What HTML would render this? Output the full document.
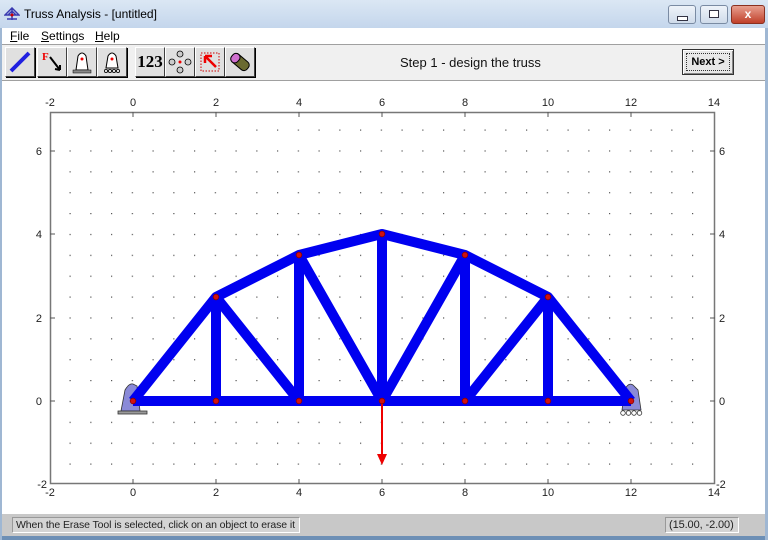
<!DOCTYPE html>
<html><head><style>
body{margin:0;width:768px;height:540px;overflow:hidden;font-family:"Liberation Sans",sans-serif;background:#fff;position:relative}
.title{position:absolute;left:0;top:0;width:768px;height:28px;background:linear-gradient(#dbe7f4,#c4d6ec);border-bottom:1px solid #a9bcd4}
.title span{position:absolute;left:24px;top:7px;font-size:12px;color:#000}
.wb{position:absolute;top:5px;height:17px;border:1px solid #7a8ba3;border-radius:3px;background:linear-gradient(#eef3f9,#cfdbea)}
.menu{position:absolute;left:0;top:28px;width:768px;height:16px;background:#fff;font-size:12px}
.menu span{position:absolute;top:1px}
.tb{position:absolute;left:0;top:44px;width:768px;height:35px;background:#f0f0f0;border-top:1px solid #a0a0a0;border-bottom:1px solid #a0a0a0}
.btn{position:absolute;top:2px;width:28px;height:28px;background:#e0e0e0;border:1px solid;border-color:#fff #404040 #404040 #fff;box-shadow:1px 1px 0 #000}
.status{position:absolute;left:0;top:514px;width:768px;height:22px;background:#c8c8c8;font-size:11px}
.status div{position:absolute;top:3px;height:14px;border:1px solid;border-color:#999 #fff #fff #999;background:#d4d4d4;line-height:14px;padding:0 3px;color:#222;white-space:nowrap;overflow:hidden;letter-spacing:-0.1px}
</style></head><body>
<div class="title">
<svg style="position:absolute;left:4px;top:7px" width="16" height="14"><path d="M1 8 L8 1 L15 8 Z M4 8 L8 4 L12 8 M8 1 V13 M3 12 H13" stroke="#3a3ab0" stroke-width="1.5" fill="none"/><circle cx="8" cy="8" r="1.5" fill="#c00"/></svg>
<span>Truss Analysis - [untitled]</span>
<div class="wb" style="left:668px;width:26px"><div style="position:absolute;left:8px;top:10px;width:9px;height:3px;background:#fff;border:1px solid #334"></div></div>
<div class="wb" style="left:700px;width:26px"><div style="position:absolute;left:8px;top:4px;width:8px;height:6px;background:#fff;border:1px solid #334"></div></div>
<div class="wb" style="left:731px;width:32px;background:linear-gradient(#e8a090,#c0402a);border-color:#8a3020;color:#fff;font-weight:bold;font-size:12px;text-align:center;line-height:16px">x</div>
</div>
<div class="menu"><span style="left:10px"><u>F</u>ile</span><span style="left:41px"><u>S</u>ettings</span><span style="left:95px"><u>H</u>elp</span></div>
<div class="tb">
<div class="btn" style="left:5px"><svg width="28" height="28"><line x1="5" y1="23" x2="23" y2="5" stroke="#2020e0" stroke-width="4"/></svg></div>
<div class="btn" style="left:37px"><svg width="28" height="28"><text x="4" y="12" font-size="11" font-weight="bold" fill="#e00" font-family="Liberation Serif">F</text><path d="M12 9 L22 22 M22 22 L17 21 M22 22 L22 17" stroke="#000" stroke-width="2" fill="none"/></svg></div>
<div class="btn" style="left:67px"><svg width="28" height="28"><path d="M8 22 L10 8 Q14 2 18 8 L20 22 Z" fill="#fff" stroke="#000"/><rect x="5" y="22" width="18" height="3" fill="#888" stroke="#000" stroke-width=".5"/><circle cx="14" cy="11" r="1.5" fill="#e00"/></svg></div>
<div class="btn" style="left:97px"><svg width="28" height="28"><path d="M8 20 L10 8 Q14 2 18 8 L20 20 Z" fill="#fff" stroke="#000"/><circle cx="14" cy="11" r="1.5" fill="#e00"/><g fill="none" stroke="#000" stroke-width=".8"><circle cx="8" cy="23" r="1.6"/><circle cx="12" cy="23" r="1.6"/><circle cx="16" cy="23" r="1.6"/><circle cx="20" cy="23" r="1.6"/></g></svg></div>
<div class="btn" style="left:135px;font:bold 17px 'Liberation Serif',serif;line-height:28px;text-align:center">123</div>
<div class="btn" style="left:165px"><svg width="28" height="28"><g fill="#ccc" stroke="#000" stroke-width=".8"><circle cx="14" cy="6" r="3"/><circle cx="6" cy="14" r="3"/><circle cx="22" cy="14" r="3"/><circle cx="14" cy="22" r="3"/></g><circle cx="14" cy="14" r="1.5" fill="#e00"/></svg></div>
<div class="btn" style="left:195px"><svg width="28" height="28"><rect x="5" y="5" width="18" height="18" fill="none" stroke="#c00" stroke-dasharray="1.5 1.5"/><path d="M9 8 L20 19 M9 8 L9 15 M9 8 L16 8" stroke="#e00" stroke-width="2.5" fill="none"/></svg></div>
<div class="btn" style="left:225px"><svg width="28" height="28"><g transform="rotate(40 14 14)"><rect x="4" y="9" width="20" height="10" rx="4" fill="#6a6a30" stroke="#000"/><rect x="4" y="9" width="8" height="10" rx="4" fill="#d070d0" stroke="#000"/></g></svg></div>
<div style="position:absolute;left:400px;top:10px;font-size:13px;color:#111">Step 1 - design the truss</div>
<div style="position:absolute;left:682px;top:4px;width:50px;height:24px;border:1px solid #333;background:#e8e8e8;box-shadow:inset 1px 1px #fff,inset -1px -1px #888"><div style="position:absolute;left:3px;top:3px;right:3px;bottom:3px;border:1px dotted #333;font:bold 11px 'Liberation Sans',sans-serif;text-align:center;line-height:16px">Next &gt;</div></div>
</div>
<svg style="position:absolute;left:0;top:80px" width="768" height="434" viewBox="0 80 768 434">
<defs><pattern id="d" x="69.5" y="129.5" width="20.75" height="20.875" patternUnits="userSpaceOnUse"><rect width="1.2" height="1.2" fill="#555"/></pattern></defs>
<rect x="66" y="126" width="632" height="342" fill="url(#d)"/>
<rect x="50.5" y="112.5" width="664" height="371" fill="none" stroke="#777" stroke-width="1.5"/>
<g stroke="#555" stroke-width="1">
<line x1="133" y1="112" x2="133" y2="117"/><line x1="216" y1="112" x2="216" y2="117"/><line x1="299" y1="112" x2="299" y2="117"/><line x1="382" y1="112" x2="382" y2="117"/><line x1="465" y1="112" x2="465" y2="117"/><line x1="548" y1="112" x2="548" y2="117"/><line x1="631" y1="112" x2="631" y2="117"/>
<line x1="133" y1="484" x2="133" y2="479"/><line x1="216" y1="484" x2="216" y2="479"/><line x1="299" y1="484" x2="299" y2="479"/><line x1="382" y1="484" x2="382" y2="479"/><line x1="465" y1="484" x2="465" y2="479"/><line x1="548" y1="484" x2="548" y2="479"/><line x1="631" y1="484" x2="631" y2="479"/>
<line x1="50" y1="151" x2="55" y2="151"/><line x1="50" y1="234" x2="55" y2="234"/><line x1="50" y1="318" x2="55" y2="318"/><line x1="50" y1="401" x2="55" y2="401"/>
<line x1="715" y1="151" x2="710" y2="151"/><line x1="715" y1="234" x2="710" y2="234"/><line x1="715" y1="318" x2="710" y2="318"/><line x1="715" y1="401" x2="710" y2="401"/>
</g>
<g font-family="Liberation Sans,sans-serif" font-size="11" fill="#222" text-anchor="middle">
<text x="50" y="106">-2</text><text x="133" y="106">0</text><text x="216" y="106">2</text><text x="299" y="106">4</text><text x="382" y="106">6</text><text x="465" y="106">8</text><text x="548" y="106">10</text><text x="631" y="106">12</text><text x="714" y="106">14</text>
<text x="50" y="496">-2</text><text x="133" y="496">0</text><text x="216" y="496">2</text><text x="299" y="496">4</text><text x="382" y="496">6</text><text x="465" y="496">8</text><text x="548" y="496">10</text><text x="631" y="496">12</text><text x="714" y="496">14</text>
</g>
<g font-family="Liberation Sans,sans-serif" font-size="11" fill="#222">
<text x="42" y="155" text-anchor="end">6</text><text x="42" y="238" text-anchor="end">4</text><text x="42" y="322" text-anchor="end">2</text><text x="42" y="405" text-anchor="end">0</text><text x="47" y="488" text-anchor="end">-2</text>
<text x="719" y="155">6</text><text x="719" y="238">4</text><text x="719" y="322">2</text><text x="719" y="405">0</text><text x="716" y="488">-2</text>
</g>
<path d="M121 411 L125 390 Q129 383 133 384 L137 386 L140 411 Z" fill="#8a8ad8" stroke="#333" stroke-width=".8"/>
<rect x="118" y="411" width="29" height="3" fill="#999" stroke="#333" stroke-width=".8"/>
<path d="M622 410 L625 389 Q629 382 633 385 L638 390 L641 410 Z" fill="#8a8ad8" stroke="#333" stroke-width=".8"/>
<g fill="#fff" stroke="#333" stroke-width=".8"><circle cx="623" cy="413" r="2.3"/><circle cx="628.5" cy="413" r="2.3"/><circle cx="634" cy="413" r="2.3"/><circle cx="639.5" cy="413" r="2.3"/></g>
<g stroke="#0000f0" stroke-width="10" stroke-linecap="butt" fill="none" stroke-linejoin="round">
<path d="M133 401 H631"/>
<path d="M133 401 L216 297 L299 255 L382 234 L465 255 L548 297 L631 401"/>
<path d="M216 297 V401 M299 255 V401 M382 234 V401 M465 255 V401 M548 297 V401"/>
<path d="M216 297 L299 401 M299 255 L382 401 M382 401 L465 255 M465 401 L548 297"/>
</g>
<path d="M382 401 V458" stroke="#e00" stroke-width="2"/>
<path d="M377 454 L382 465 L387 454 Z" fill="#e00"/>
<g fill="#d01010" stroke="#800" stroke-width=".8">
<circle cx="133" cy="401" r="2.8"/><circle cx="216" cy="401" r="2.8"/><circle cx="299" cy="401" r="2.8"/><circle cx="382" cy="401" r="2.8"/><circle cx="465" cy="401" r="2.8"/><circle cx="548" cy="401" r="2.8"/><circle cx="631" cy="401" r="2.8"/>
<circle cx="216" cy="297" r="2.8"/><circle cx="299" cy="255" r="2.8"/><circle cx="382" cy="234" r="2.8"/><circle cx="465" cy="255" r="2.8"/><circle cx="548" cy="297" r="2.8"/>
</g>
</svg>
<div class="status"><div style="left:12px;width:280px;font-size:10.5px">When the Erase Tool is selected, click on an object to erase it</div><div style="left:665px;width:66px">(15.00, -2.00)</div></div>
<div style="position:absolute;left:0;top:536px;width:768px;height:4px;background:#6d8fb5"></div>
<div style="position:absolute;left:765px;top:28px;width:3px;height:512px;background:#9fb7d3"></div>
<div style="position:absolute;left:0;top:28px;width:2px;height:512px;background:#9fb7d3"></div>
</body></html>
